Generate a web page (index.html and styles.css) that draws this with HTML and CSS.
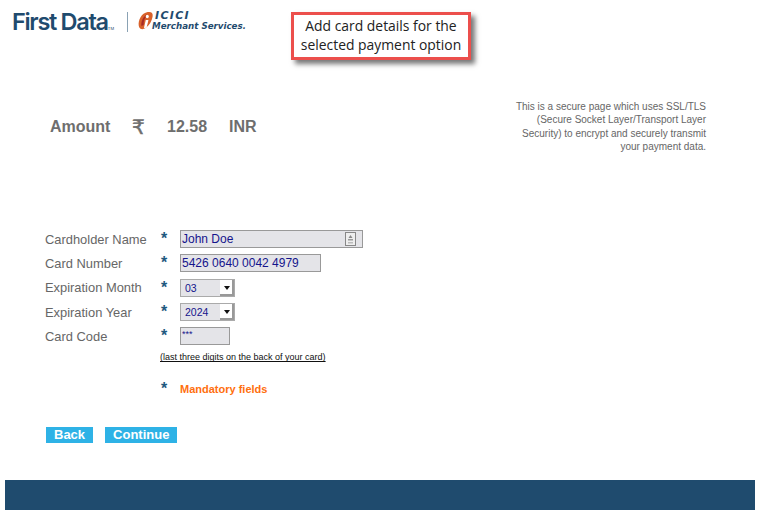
FILE: index.html
```html
<!DOCTYPE html>
<html lang="en">
<head>
<meta charset="utf-8">
<title>Payment</title>
<link rel="stylesheet" href="styles.css">
</head>
<body>
<div class="page">
  <header class="logos">
    <span class="fd">First Data<small>TM</small></span>
    <span class="sep"></span>
    <svg class="mark" width="17" height="20" viewBox="0 0 19 20" preserveAspectRatio="none" aria-hidden="true">
      <path d="M2 15C1 9 5 2 12 1c4-.6 6 1 5.500 4-.6 4-3 9-8 12-3 2-6.500 1.500-7.500-2z" fill="#d9622b"/>
      <path d="M5 15c-1-4 2-10 7-12-3 3-5 7-4.500 11z" fill="#a82a25"/>
      <circle cx="11.500" cy="5.500" r="1.700" fill="#fff"/>
      <path d="M9.800 9h3l-2 7.500c-1 .6-2.200.6-3 .2z" fill="#fff"/>
    </svg>
    <div class="ms">
      <div class="ic">ICICI</div>
      <div class="mt">Merchant Services<small>.</small></div>
    </div>
  </header>
  <aside class="callout">Add card details for the<br>selected payment option</aside>
  <section class="summary">
    <div class="amount"><span class="a-l">Amount</span><span class="a-r">₹</span><span class="a-v">12.58</span><span>INR</span></div>
    <p class="secure">This is a secure page which uses SSL/TLS<br>(Secure Socket Layer/Transport Layer<br>Security) to encrypt and securely transmit<br>your payment data.</p>
  </section>
  <form class="form">
    <div class="lbl">Cardholder Name</div><div class="star">*</div>
    <div class="fld name"><span>John Doe</span>
      <svg width="11" height="14" viewBox="0 0 11 14" aria-hidden="true"><rect x=".5" y=".5" width="10" height="13" fill="#eee" stroke="#888"/><path d="M5.500 3l2 3h-4z" fill="#888"/><rect x="3" y="7" width="5" height="1.500" fill="#999"/><rect x="3" y="10" width="5" height="1.500" fill="#bbb"/></svg>
    </div>
    <div class="lbl">Card Number</div><div class="star">*</div>
    <div class="fld num"><span>5426 0640 0042 4979</span></div>
    <div class="lbl">Expiration Month</div><div class="star">*</div>
    <div class="sel"><span>03</span><i class="arrow"></i></div>
    <div class="lbl">Expiration Year</div><div class="star">*</div>
    <div class="sel"><span>2024</span><i class="arrow"></i></div>
    <div class="lbl">Card Code</div><div class="star">*</div>
    <div class="fld code"><span>***</span></div>
    <div class="hint"><u>(last three digits on the back of your card)</u></div>
    <div class="star mand-star">*</div>
    <div class="mand">Mandatory fields</div>
  </form>
  <div class="btns"><a class="btn">Back</a><a class="btn">Continue</a></div>
  <footer class="foot"></footer>
</div>
</body>
</html>
```
FILE: styles.css
```css
* { box-sizing: border-box; }
html, body { margin: 0; padding: 0; background: #fff; }
body { font-family: "Liberation Sans", Arial, sans-serif; overflow: hidden; }
.page { position: relative; width: 762px; height: 515px; padding-top: 10px; }

.logos { display: flex; align-items: flex-start; height: 24px; padding-left: 12px; }
.fd { font-family: "Inter", sans-serif; font-size: 23.500px; font-weight: 600; letter-spacing: -1.300px; color: #1f4b6e; line-height: 23px; white-space: nowrap; width: 105px; }
.fd small { font-size: 4px; letter-spacing: 0; font-weight: 400; }
.sep { width: 1px; height: 20px; margin: 2px 9px 0 10px; background: #8aa2b4; }
.mark { margin-top: 1px; }
.ms { color: #1f4b6e; font-family: "DejaVu Sans", sans-serif; font-weight: 700; font-style: italic; }
.ic { font-size: 11px; line-height: 10px; letter-spacing: 1.300px; margin: 1px 0 0 1px; }
.mt { font-size: 8.700px; line-height: 10px; margin-left: -2px; white-space: nowrap; }
.mt small { font-size: 8px; }

.callout { position: absolute; left: 291px; top: 12px; width: 180px; height: 48px; border: 3px solid #ec4f4c; background: #fff; box-shadow: 4px 4px 5px #777; font-family: "Open Sans", sans-serif; font-size: 13.900px; line-height: 19px; color: #222; text-align: center; padding-top: 1px; }

.summary { display: flex; justify-content: space-between; padding: 84px 56px 0 50px; height: 196px; }
.amount { display: flex; font-size: 16px; font-weight: 700; color: #6e6e6e; line-height: 18px; height: 18px; }
.a-l { width: 82px; }
.a-r { width: 35px; font-family: "DejaVu Sans", sans-serif; font-size: 20px; font-weight: 400; -webkit-text-stroke: .5px #6e6e6e; }
.a-v { width: 62px; }
.secure { margin: -18px 0 0; font-size: 10px; line-height: 13.300px; color: #666; text-align: right; }

.form { display: grid; grid-template-columns: 116px 19px 1fr; grid-auto-rows: 24.300px; padding-left: 45px; align-items: start; font-size: 13px; }
.lbl { color: #666; font-size: 12.900px; line-height: 16px; padding-top: 1.700px; white-space: nowrap; }
.star { color: #1f5a80; font-size: 16px; font-weight: 700; line-height: 18px; height: 18px; }
.fld, .sel { height: 18px; background: #e4e4e8; border: 1px solid #999; color: #14148c; display: flex; align-items: center; padding-left: 1px; font-size: 12px; line-height: 16px; }
.name { width: 183px; justify-content: space-between; padding-right: 6px; }
.num { width: 141px; }
.code { width: 50px; font-size: 9px; align-items: flex-start; line-height: 12px; }
.sel { width: 55px; padding-left: 4px; font-size: 10.500px; position: relative; border-color: #aaa; }
.arrow { position: absolute; right: 0; top: 0; width: 14px; height: 16px; background: #fff; border-right: 2px solid #999; border-bottom: 2px solid #999; }
.arrow::after { content: ""; position: absolute; left: 4px; top: 6px; border-left: 3px solid transparent; border-right: 3px solid transparent; border-top: 4px solid #111; }
.hint { grid-column: 2 / 4; grid-row: 6; margin: 0 0 0 -1px; font-size: 9px; line-height: 12px; color: #111; }
.mand-star { grid-column: 2; grid-row: 7; margin-top: 4px; }
.mand { grid-column: 3; grid-row: 7; margin-top: 7px; font-size: 11px; font-weight: 700; color: #ff6f0f; line-height: 12px; }

.btns { display: flex; gap: 12px; padding-left: 46px; margin-top: 27px; }
.btn { height: 16px; padding: 0 8px; background: #2eb2e6; color: #fff; font-size: 13px; font-weight: 700; line-height: 16px; }
.foot { position: absolute; left: 5px; right: 7px; top: 480px; height: 30px; background: #1f4b6e; }
```
